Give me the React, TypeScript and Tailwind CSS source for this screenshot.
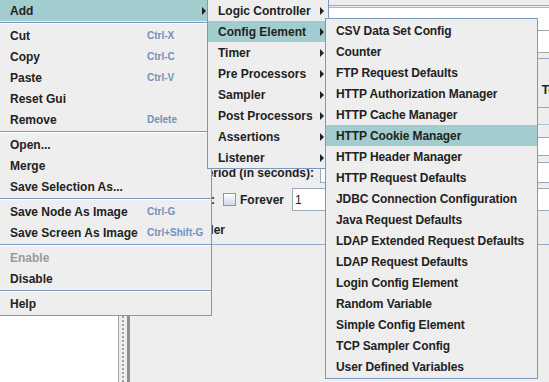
import clsx from "clsx"

type MenuItem =
  | { label: string; shortcut?: string; arrow?: boolean; active?: boolean; disabled?: boolean }
  | "sep"

const mainMenu: MenuItem[] = [
  { label: "Add", arrow: true, active: true },
  "sep",
  { label: "Cut", shortcut: "Ctrl-X" },
  { label: "Copy", shortcut: "Ctrl-C" },
  { label: "Paste", shortcut: "Ctrl-V" },
  { label: "Reset Gui" },
  { label: "Remove", shortcut: "Delete" },
  "sep",
  { label: "Open..." },
  { label: "Merge" },
  { label: "Save Selection As..." },
  "sep",
  { label: "Save Node As Image", shortcut: "Ctrl-G" },
  { label: "Save Screen As Image", shortcut: "Ctrl+Shift-G" },
  "sep",
  { label: "Enable", disabled: true },
  { label: "Disable" },
  "sep",
  { label: "Help" },
]

const addMenu: MenuItem[] = [
  { label: "Logic Controller", arrow: true },
  { label: "Config Element", arrow: true, active: true },
  { label: "Timer", arrow: true },
  { label: "Pre Processors", arrow: true },
  { label: "Sampler", arrow: true },
  { label: "Post Processors", arrow: true },
  { label: "Assertions", arrow: true },
  { label: "Listener", arrow: true },
]

const configMenu: MenuItem[] = [
  { label: "CSV Data Set Config" },
  { label: "Counter" },
  { label: "FTP Request Defaults" },
  { label: "HTTP Authorization Manager" },
  { label: "HTTP Cache Manager" },
  { label: "HTTP Cookie Manager", active: true },
  { label: "HTTP Header Manager" },
  { label: "HTTP Request Defaults" },
  { label: "JDBC Connection Configuration" },
  { label: "Java Request Defaults" },
  { label: "LDAP Extended Request Defaults" },
  { label: "LDAP Request Defaults" },
  { label: "Login Config Element" },
  { label: "Random Variable" },
  { label: "Simple Config Element" },
  { label: "TCP Sampler Config" },
  { label: "User Defined Variables" },
]

function Arrow() {
  return (
    <svg width="4" height="8" viewBox="0 0 4 8" className="ml-auto shrink-0">
      <path d="M0 0 L4 4 L0 8 Z" fill="#222222" />
    </svg>
  )
}

function Separator() {
  return (
    <div className="py-[1px]">
      <div className="h-px bg-[#7c98c0]" />
      <div className="h-px bg-white" />
    </div>
  )
}

function Menu({ items, labelWidth, arrowPad }: { items: MenuItem[]; labelWidth?: string; arrowPad: string }) {
  return (
    <>
      {items.map((item, i) =>
        item === "sep" ? (
          <Separator key={i} />
        ) : (
          <div
            key={i}
            className={clsx("flex h-[21px] items-center pl-[10px]", arrowPad, item.active && "bg-[#a1cdce]")}
          >
            <span
              className={clsx(
                "whitespace-nowrap text-[12px] font-bold leading-none",
                labelWidth,
                item.disabled ? "text-[#9a9a9a]" : "text-[#222222]"
              )}
            >
              {item.label}
            </span>
            {item.shortcut && (
              <span className="whitespace-nowrap text-[10px] leading-none text-[#7391bd]">{item.shortcut}</span>
            )}
            {item.arrow && <Arrow />}
          </div>
        )
      )}
    </>
  )
}

function Checkbox() {
  return <div className="h-[13px] w-[13px] shrink-0 border border-[#8499b5] bg-linear-to-b from-white to-[#cddae8]" />
}

function Radio({ label }: { label: string }) {
  return (
    <div className="flex shrink-0 items-center gap-[4px]">
      <div className="h-[13px] w-[13px] rounded-full border border-[#8499b5] bg-white" />
      <span className="whitespace-nowrap">{label}</span>
    </div>
  )
}

export default function App() {
  return (
    <div className="relative flex h-[382px] w-[549px] overflow-hidden bg-[#eeeeee] font-['Liberation_Sans',Arial,sans-serif] text-[12px] font-bold text-[#222222]">
      {/* tree panel */}
      <div className="h-full w-[118px] shrink-0 bg-white" />

      {/* split pane divider */}
      <div className="flex h-full w-[12px] shrink-0">
        <div className="w-px bg-[#a0a0a0]" />
        <div className="flex w-[8px] justify-center">
          <div className="h-full w-[2px] border-l-2 border-dotted border-[#a5a5a5]" />
        </div>
        <div className="w-[3px] bg-[#8f8f8f]" />
      </div>

      {/* thread group panel */}
      <div className="flex min-w-0 flex-1 flex-col">
        <div className="h-[5px]" />
        <div className="h-[26px] border-y border-[#a5a5a5] bg-white">
          <div className="h-[2px] border-b border-[#b5b5b5] bg-[#eeeeee]" />
        </div>
        <div className="h-[22px] border-b border-[#a5a5a5] bg-white" />
        <div className="h-[5px]" />
        <div className="flex h-[50px] items-end overflow-hidden border-y border-[#8fa8c8] pb-[7px]">
          <div className="flex h-[20px] items-center gap-[17px] pl-[8px]">
            <Radio label="Continue" />
            <Radio label="Start Next Thread Loop" />
            <Radio label="Stop Thread" />
            <Radio label="Stop Test" />
            <Radio label="Stop Test Now" />
          </div>
        </div>
        <div className="h-[16px]" />
        <div className="h-[13px] border-t border-[#b4c3d4]" />
        <div className="flex h-[19px]">
          <div className="w-[184px] shrink-0 text-right leading-[19px]">Number of Threads (users):</div>
          <div className="ml-[6px] flex-1 border-y border-l border-[#9aa8b8] bg-white" />
        </div>
        <div className="h-[6px]" />
        <div className="flex h-[21px] items-center">
          <div className="w-[184px] shrink-0 text-right">Ramp-Up Period (in seconds):</div>
          <div className="ml-[6px] h-full flex-1 border-y border-l border-[#9aa8b8] bg-white" />
        </div>
        <div className="h-[5px]" />
        <div className="flex h-[23px] items-center">
          <div className="w-[85px] shrink-0 text-right">Loop Count:</div>
          <div className="ml-[8px]">
            <Checkbox />
          </div>
          <span className="ml-[4px]">Forever</span>
          <div className="ml-[8px] flex h-full flex-1 items-center border-y border-l border-[#9aa8b8] bg-white pl-[2px] font-normal">
            1
          </div>
        </div>
        <div className="h-[7px]" />
        <div className="flex h-[23px] items-center gap-[4px] pl-[20px]">
          <Checkbox />
          <span>Scheduler</span>
        </div>
        <div className="h-[3px]" />
        <div className="flex-1 border-t border-[#8fa8c8]" />
      </div>

      {/* popup menus */}
      <div className="absolute left-[-1px] top-[-1px] w-[213px] border border-[#7c98c0] bg-[#eeeeee] pb-[1px]">
        <Menu items={mainMenu} labelWidth="w-[137px]" arrowPad="pr-[5px]" />
      </div>
      <div className="absolute left-[207px] top-[-1px] w-[122px] border border-[#7c98c0] bg-[#eeeeee]">
        <Menu items={addMenu} arrowPad="pr-[4px]" />
      </div>
      <div className="absolute left-[325px] top-[18px] w-[213px] border border-[#7c98c0] bg-[#eeeeee] py-[1px] tracking-[-0.1px]">
        <Menu items={configMenu} arrowPad="pr-[4px]" />
      </div>
    </div>
  )
}
